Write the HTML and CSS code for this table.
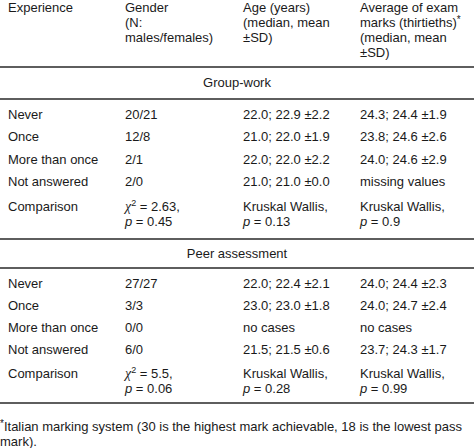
FILE: index.html
```html
<!DOCTYPE html>
<html>
<head>
<meta charset="utf-8">
<link rel="stylesheet" href="styles.css">
</head>
<body>
<table class="stats">
  <colgroup>
    <col class="c1"><col class="c2"><col class="c3"><col class="c4">
  </colgroup>
  <thead>
    <tr class="head">
      <th>Experience</th>
      <th>Gender<br>(N:<br>males/females)</th>
      <th>Age (years)<br>(median, mean<br>±SD)</th>
      <th>Average of exam<br>marks (thirtieths)<sup class="ast">*</sup><br>(median, mean<br>±SD)</th>
    </tr>
  </thead>
  <tbody class="group">
    <tr class="section"><td colspan="4">Group-work</td></tr>
    <tr class="first"><td>Never</td><td>20/21</td><td>22.0; 22.9 ±2.2</td><td>24.3; 24.4 ±1.9</td></tr>
    <tr><td>Once</td><td>12/8</td><td>21.0; 22.0 ±1.9</td><td>23.8; 24.6 ±2.6</td></tr>
    <tr><td>More than once</td><td>2/1</td><td>22.0; 22.0 ±2.2</td><td>24.0; 24.6 ±2.9</td></tr>
    <tr><td>Not answered</td><td>2/0</td><td>21.0; 21.0 ±0.0</td><td>missing values</td></tr>
    <tr class="cmp"><td>Comparison</td><td><i class="chi">χ</i><sup>2</sup> = 2.63,<br><i>p</i> = 0.45</td><td>Kruskal Wallis,<br><i>p</i> = 0.13</td><td>Kruskal Wallis,<br><i>p</i> = 0.9</td></tr>
  </tbody>
  <tbody class="peer">
    <tr class="section"><td colspan="4">Peer assessment</td></tr>
    <tr class="first"><td>Never</td><td>27/27</td><td>22.0; 22.4 ±2.1</td><td>24.0; 24.4 ±2.3</td></tr>
    <tr><td>Once</td><td>3/3</td><td>23.0; 23.0 ±1.8</td><td>24.0; 24.7 ±2.4</td></tr>
    <tr><td>More than once</td><td>0/0</td><td>no cases</td><td>no cases</td></tr>
    <tr><td>Not answered</td><td>6/0</td><td>21.5; 21.5 ±0.6</td><td>23.7; 24.3 ±1.7</td></tr>
    <tr class="cmp"><td>Comparison</td><td><i class="chi">χ</i><sup>2</sup> = 5.5,<br><i>p</i> = 0.06</td><td>Kruskal Wallis,<br><i>p</i> = 0.28</td><td>Kruskal Wallis,<br><i>p</i> = 0.99</td></tr>
  </tbody>
</table>
<p class="note"><sup class="ast">*</sup>Italian marking system (30 is the highest mark achievable, 18 is the lowest pass<br>mark).</p>
</body>
</html>
```
FILE: styles.css
```css
html, body {
  margin: 0;
  padding: 0;
  background: #fff;
}
body {
  font-family: "Liberation Sans", Arial, sans-serif;
  font-size: 13px;
  color: #1a1a1a;
  width: 474px;
  overflow: hidden;
}
.stats {
  width: 474px;
  table-layout: fixed;
  border-collapse: collapse;
}
.c1 { width: 125px; }
.c2 { width: 118px; }
.c3 { width: 117px; }
.c4 { width: 114px; }
.stats th, .stats td {
  padding: 0;
  text-align: left;
  vertical-align: top;
  font-weight: normal;
  line-height: 15.5px;
  white-space: nowrap;
}
.stats th:first-child, .stats td:first-child {
  padding-left: 8px;
}
.stats .head th {
  line-height: 15px;
  padding-bottom: 6px;
  border-bottom: 2px solid #5e5e5e;
}
sup {
  font-size: 9px;
  line-height: 0;
  vertical-align: 5px;
}
sup.ast {
  font-size: 10px;
  vertical-align: 4px;
}
.chi {
  font-family: "Liberation Serif", "Times New Roman", serif;
  font-size: 14px;
}
.stats .section td {
  text-align: center;
  padding: 7px 0;
  border-bottom: 2px solid #5e5e5e;
}
.group td { padding-top: 3.5px; padding-bottom: 3.5px; }
.group .first td { padding-top: 7px; }
.group .cmp td {
  padding-top: 5.5px;
  padding-bottom: 8px;
  border-bottom: 2px solid #5e5e5e;
}
.stats .peer .section td { padding: 6px 0; }
.peer td { padding-top: 3.25px; padding-bottom: 3.25px; }
.peer .first td { padding-top: 6.5px; }
.peer .cmp td {
  padding-top: 5.5px;
  padding-bottom: 5.5px;
  border-bottom: 2px solid #5e5e5e;
}
.note {
  margin: 15px 0 0 0;
  line-height: 15px;
  white-space: nowrap;
}
```
